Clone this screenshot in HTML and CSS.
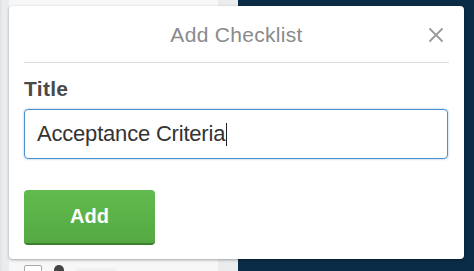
FILE: index.html
```html
<!DOCTYPE html>
<html>
<head>
<meta charset="utf-8">
<link rel="stylesheet" href="styles.css">
</head>
<body>
<div class="board">
  <div class="board-left">
    <div class="edge"></div>
    <div class="card">
      <div class="card-row">
        <span class="check"></span>
        <span class="person"></span>
        <span class="faint"></span>
      </div>
    </div>
    <div class="gutter"></div>
  </div>
  <div class="board-right"></div>
</div>

<div class="popover">
  <div class="pop-header">
    <span class="pop-title">Add Checklist</span>
    <svg class="close" width="14" height="14" viewBox="0 0 14 14">
      <path d="M1 1 L13 13 M13 1 L1 13" stroke="#9a9a9a" stroke-width="1.8" stroke-linecap="round"/>
    </svg>
  </div>
  <div class="pop-body">
    <label class="field-label">Title</label>
    <div class="input">
      <span class="input-text">Acceptance Criteria</span><span class="caret"></span>
    </div>
    <button class="btn-add">Add</button>
  </div>
</div>
</body>
</html>
```
FILE: styles.css
```css
html, body {
  margin: 0;
  padding: 0;
  width: 474px;
  height: 271px;
  overflow: hidden;
  font-family: "Helvetica Neue", "Liberation Sans", Arial, sans-serif;
}
.board {
  display: flex;
  width: 474px;
  height: 271px;
}
.board-left {
  width: 238px;
  display: flex;
  background: #ebeced;
}
.edge {
  width: 9px;
  background: #ebeced;
  border-left: 2px solid #e3e4e5;
  box-sizing: border-box;
}
.card {
  width: 209px;
  background: #f7f7f7;
  display: flex;
  flex-direction: column;
  justify-content: flex-end;
}
.card-row {
  display: flex;
  align-items: flex-start;
  gap: 12px;
  padding-left: 15px;
  height: 6px;
  overflow: hidden;
}
.check {
  width: 16px;
  height: 14px;
  border: 1.5px solid #a9a9a9;
  border-radius: 2px;
  background: #fff;
}
.person {
  width: 10px;
  height: 10px;
  border-radius: 50%;
  background: #444;
}
.faint {
  width: 40px;
  height: 10px;
  margin-top: 3px;
  background: #f0f0f0;
  border-radius: 2px;
}
.gutter {
  flex: 1;
  background: #ebeced;
}
.board-right {
  flex: 1;
  background: #0b2c47;
}

.popover {
  position: absolute;
  left: 9px;
  top: 6px;
  width: 455px;
  height: 253px;
  background: #fff;
  border-radius: 4px;
  box-shadow: 0 1px 3px rgba(0,0,0,0.35);
  box-sizing: border-box;
  padding: 0 15px;
}
.pop-header {
  position: relative;
  height: 56px;
  border-bottom: 1px solid #dcdcdc;
  display: flex;
  align-items: center;
  justify-content: center;
}
.pop-title {
  color: #8a8a8a;
  font-size: 21px;
  letter-spacing: 0.3px;
  padding-top: 1px;
}
.close {
  position: absolute;
  right: 6px;
  top: 22px;
}
.pop-body {
  display: flex;
  flex-direction: column;
  align-items: flex-start;
}
.field-label {
  margin-top: 15px;
  font-weight: bold;
  font-size: 21px;
  line-height: 22px;
  letter-spacing: 0.3px;
  color: #4a4a4a;
}
.input {
  margin-top: 9px;
  width: 424px;
  height: 50px;
  box-sizing: border-box;
  border: 1px solid #4b8fcf;
  border-radius: 4px;
  box-shadow: 0 0 2px rgba(75,143,207,0.7);
  display: flex;
  align-items: center;
  padding-left: 12px;
}
.input-text {
  font-size: 22px;
  color: #333;
  letter-spacing: -0.2px;
}
.caret {
  width: 1px;
  height: 23px;
  background: #222;
  margin-left: 1px;
}
.btn-add {
  margin-top: 31px;
  width: 131px;
  height: 55px;
  border: none;
  border-bottom: 2px solid #3d7f2f;
  border-radius: 4px;
  background: linear-gradient(#61bb4d, #55a943);
  color: #fff;
  font-family: "Helvetica Neue", "Liberation Sans", Arial, sans-serif;
  font-weight: bold;
  font-size: 20px;
  padding: 0;
}
```
